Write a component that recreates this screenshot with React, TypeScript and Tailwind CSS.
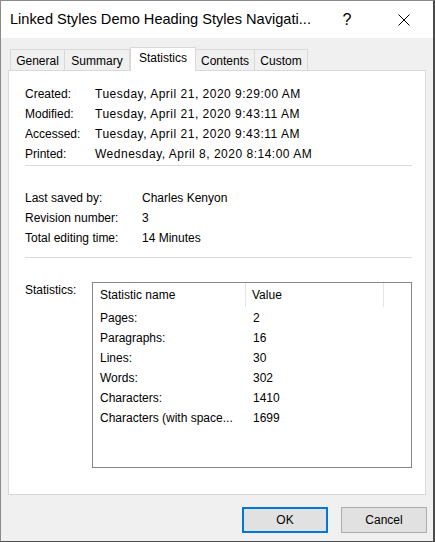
const font = { fontFamily: '"Liberation Sans", Arial, sans-serif' };

const dates = [
  ['Created:', 'Tuesday, April 21, 2020 9:29:00 AM'],
  ['Modified:', 'Tuesday, April 21, 2020 9:43:11 AM'],
  ['Accessed:', 'Tuesday, April 21, 2020 9:43:11 AM'],
  ['Printed:', 'Wednesday, April 8, 2020 8:14:00 AM'],
];

const info = [
  ['Last saved by:', 'Charles Kenyon'],
  ['Revision number:', '3'],
  ['Total editing time:', '14 Minutes'],
];

const stats = [
  ['Pages:', '2'],
  ['Paragraphs:', '16'],
  ['Lines:', '30'],
  ['Words:', '302'],
  ['Characters:', '1410'],
  ['Characters (with space...', '1699'],
];

const tabs = ['General', 'Summary', 'Statistics', 'Contents', 'Custom'];
const tabWidths = ['w-[55px]', 'w-[66px]', 'w-[66px]', 'w-[60px]', 'w-[54px]'];

export default function App() {
  return (
    <div
      className="w-[435px] h-[542px] flex flex-col bg-[#f0f0f0] text-[12px] text-black border-l border-t border-[#8a8a8a] border-r-2 border-r-[#4b4b4b] border-b border-b-[#4b4b4b] overflow-hidden"
      style={font}
    >
      {/* Title bar */}
      <div className="h-[37px] shrink-0 bg-white flex items-center">
        <span className="pl-[9px] text-[14.6px] text-black whitespace-nowrap">
          Linked Styles Demo Heading Styles Navigati...
        </span>
        <span className="ml-auto w-[56px] text-center text-[16px]">?</span>
        <span className="w-[58px] flex justify-center">
          <svg width="12" height="12" viewBox="0 0 12 12">
            <path d="M0.5 0.5 L11.5 11.5 M11.5 0.5 L0.5 11.5" stroke="#000" strokeWidth="1" fill="none" />
          </svg>
        </span>
      </div>

      {/* Tabs */}
      <div className="flex items-end h-[32px] pl-[9px] shrink-0">
        {tabs.map((t, i) =>
          t === 'Statistics' ? (
            <div
              key={t}
              className={`${tabWidths[i]} h-[24px] -mb-px relative z-10 bg-white border border-b-0 border-[#d9d9d9] flex items-center justify-center pb-[3px]`}
            >
              {t}
            </div>
          ) : (
            <div
              key={t}
              className={`${tabWidths[i]} h-[21px] bg-[#f0f0f0] border border-b-0 border-[#d9d9d9] -ml-px first:ml-0 flex items-center justify-center pt-[1px]`}
            >
              {t}
            </div>
          )
        )}
      </div>

      {/* Panel */}
      <div className="mx-[7px] h-[425px] shrink-0 bg-white border border-[#d9d9d9] pl-[16px] pr-[13px] pt-[13px]">
        <div className="grid grid-cols-[70px_1fr] leading-[20px]">
          {dates.map(([k, v]) => (
            <div key={k} className="contents">
              <span>{k}</span>
              <span className="whitespace-nowrap tracking-[0.5px]">{v}</span>
            </div>
          ))}
        </div>
        <div className="h-px bg-[#dadada] mt-[1px]" />

        <div className="grid grid-cols-[117px_1fr] leading-[20px] mt-[22px]">
          {info.map(([k, v]) => (
            <div key={k} className="contents">
              <span className="whitespace-nowrap">{k}</span>
              <span>{v}</span>
            </div>
          ))}
        </div>
        <div className="h-px bg-[#dadada] mt-[9px]" />

        <div className="flex mt-[22px]">
          <span className="w-[67px] leading-[20px]">Statistics:</span>
          <div className="mt-[2px] w-[320px] h-[186px] border border-[#828790] bg-white">
            <div className="flex h-[24px] items-center">
              <span className="w-[153px] h-full pl-[7px] flex items-center border-r border-[#e5e5e5]">Statistic name</span>
              <span className="w-[138px] h-full pl-[6px] flex items-center border-r border-[#e5e5e5]">Value</span>
            </div>
            <div className="leading-[20px] mt-[1px]">
              {stats.map(([k, v]) => (
                <div key={k} className="flex">
                  <span className="w-[154px] pl-[7px] whitespace-nowrap overflow-hidden">{k}</span>
                  <span className="pl-[6px]">{v}</span>
                </div>
              ))}
            </div>
          </div>
        </div>
      </div>

      {/* Buttons */}
      <div className="flex justify-end gap-[13px] pr-[6px] mt-[12px]">
        <button className="w-[86px] h-[26px] bg-[#e1e1e1] border-2 border-[#0078d7] flex items-center justify-center">
          OK
        </button>
        <button className="w-[86px] h-[26px] bg-[#e1e1e1] border border-[#adadad] flex items-center justify-center">
          Cancel
        </button>
      </div>
    </div>
  );
}
